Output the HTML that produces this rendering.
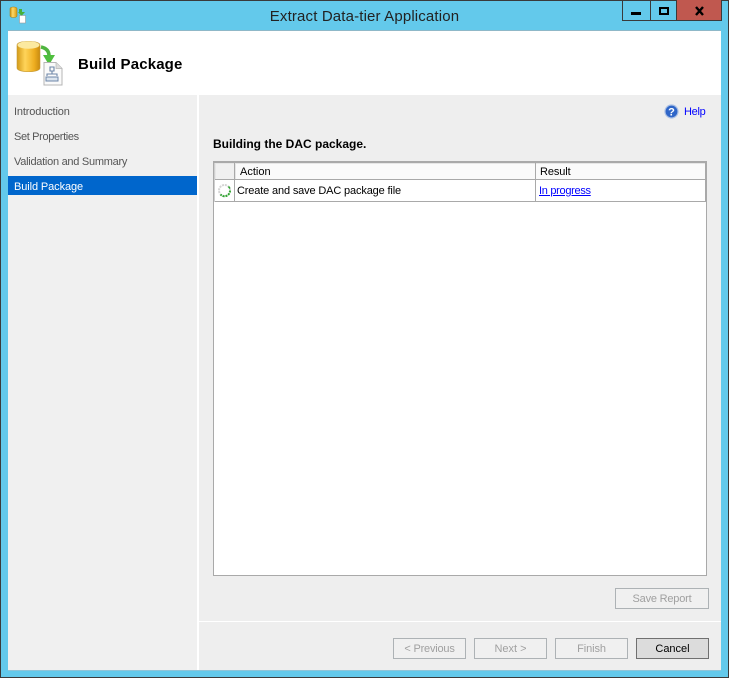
<!DOCTYPE html>
<html><head><meta charset="utf-8"><style>
html,body{margin:0;padding:0;width:729px;height:678px;overflow:hidden;background:#63c9eb}
body{position:relative;font-family:"Liberation Sans",sans-serif;font-size:11px;color:#000}
div,a,svg{position:absolute;white-space:nowrap}
.t{line-height:14px;height:14px}
.btn{box-sizing:border-box;width:73px;height:21px;border:1px solid #adb2b5;background:#f0f0f0;color:#a0a0a0;text-align:center;line-height:21px}
</style></head><body>
<div style="left:0;top:0;width:729px;height:1px;background:#3a3a3a"></div>
<div style="left:0;top:0;width:1px;height:678px;background:#3a3a3a"></div>
<div style="left:728px;top:0;width:1px;height:678px;background:#3a3a3a"></div>
<div style="left:0;top:677px;width:729px;height:1px;background:#3a3a3a"></div>
<svg style="left:9px;top:6px" width="18" height="18" viewBox="0 0 18 18">
<defs><linearGradient id="g0" x1="0" x2="1" y1="0" y2="0"><stop offset="0" stop-color="#c98f10"/><stop offset=".4" stop-color="#ffd866"/><stop offset="1" stop-color="#d79a12"/></linearGradient></defs>
<path d="M1 2.500C1 .500 8 .500 8 2.500V10C8 12 1 12 1 10Z" fill="url(#g0)" stroke="#a8780c" stroke-width=".5"/>
<path d="M10 3H13V6H16L12.500 10L9 6H10Z" fill="#45b03a"/>
<rect x="10.500" y="9.500" width="6" height="7.500" fill="#fff" stroke="#999" stroke-width=".6"/>
</svg>
<div class="t" style="left:0;top:8px;width:729px;height:18px;line-height:18px;font-size:15px;text-align:center;color:#222;letter-spacing:.15px">Extract Data-tier Application</div>
<div style="left:622px;top:0;width:100px;height:21px;box-sizing:border-box;border:1px solid #3a3a3a;border-top:0"></div>
<div style="left:676px;top:0;width:46px;height:21px;box-sizing:border-box;background:#c0584f;border:1px solid #3a3a3a;border-top:0"></div>
<div style="left:650px;top:0;width:1px;height:21px;background:#3a3a3a"></div>
<div style="left:631px;top:12px;width:10px;height:3px;background:#000"></div>
<div style="left:659px;top:7px;width:10px;height:8px;box-sizing:border-box;border:2px solid #000"></div>
<svg style="left:694px;top:6px" width="12" height="10" viewBox="0 0 12 10"><path d="M2 1l7 8M9 1l-7 8" stroke="#000" stroke-width="2.400" fill="none"/></svg>
<div style="left:8px;top:31px;width:713px;height:64px;background:#fff"></div>
<div style="left:8px;top:30px;width:713px;height:1px;background:#8fb8c8"></div>
<div style="left:8px;top:95px;width:189px;height:575px;background:#f0f0f0"></div>
<div style="left:197px;top:95px;width:2px;height:575px;background:#fff"></div>
<div style="left:199px;top:95px;width:522px;height:575px;background:#eee"></div>
<div style="left:8px;top:670px;width:713px;height:1px;background:#8fc4d8"></div>
<svg style="left:16px;top:40px" width="48" height="48" viewBox="0 0 48 48">
<defs><linearGradient id="g1" x1="0" x2="1" y1="0" y2="0"><stop offset="0" stop-color="#d39a18"/><stop offset=".35" stop-color="#ffd45a"/><stop offset=".75" stop-color="#eeae20"/><stop offset="1" stop-color="#c88a10"/></linearGradient></defs>
<path d="M1 5C1 0 24 0 24 5V28C24 33 1 33 1 28Z" fill="url(#g1)" stroke="#c49a3a" stroke-width=".6"/>
<ellipse cx="12.500" cy="5" rx="11" ry="3.800" fill="#fbe9a0"/>
<path d="M25 7C30 8 33 11 33 16" stroke="#4fb53f" stroke-width="3.500" fill="none"/>
<path d="M27 15H39L33 25Z" fill="#4fbf3f"/>
<path d="M28 22.500H40L46 28.500V45H28Z" fill="#fafafa" stroke="#b5b5b5"/>
<path d="M40 22.500V28.500H46" fill="#ddd" stroke="#b5b5b5" stroke-width=".7"/>
<path d="M34 27h4v4h-4zM36 31v3M31 36v-2h10v2" fill="none" stroke="#6d86a8" stroke-width="1.100"/>
<path d="M30 37h12v4H30z" fill="#dbe4ee" stroke="#6d86a8" stroke-width="1"/>
</svg>
<div class="t" style="left:78px;top:56px;height:18px;line-height:18px;font-size:15px;font-weight:bold;letter-spacing:.15px">Build Package</div>
<div class="t" style="left:14px;top:105px;color:#555;letter-spacing:-.15px">Introduction</div>
<div class="t" style="left:14px;top:130px;color:#555;letter-spacing:-.35px">Set Properties</div>
<div class="t" style="left:14px;top:155px;color:#555;letter-spacing:-.27px">Validation and Summary</div>
<div style="left:8px;top:176px;width:189px;height:19px;background:#0066cc"></div>
<div class="t" style="left:14px;top:180px;color:#fff;letter-spacing:-.1px">Build Package</div>
<svg style="left:664px;top:104px" width="15" height="15" viewBox="0 0 15 15">
<circle cx="7.500" cy="7.500" r="6.500" fill="#2f66c8" stroke="#a9bfe4" stroke-width="1.200"/>
<text x="7.500" y="11.500" font-family="Liberation Sans,sans-serif" font-size="11" font-weight="bold" fill="#fff" text-anchor="middle">?</text>
</svg>
<a class="t" style="left:684px;top:105px;color:#0000ff;text-decoration:none;letter-spacing:-.3px">Help</a>
<div class="t" style="left:213px;top:137px;font-size:12px;font-weight:bold">Building the DAC package.</div>
<div style="left:213px;top:161px;width:494px;height:415px;box-sizing:border-box;border:1px solid #a9a9a9;background:#fff"></div>
<div style="left:214px;top:162px;width:492px;height:18px;background:#e6e6e6"></div>
<div style="left:214px;top:162px;width:492px;height:1px;background:#a9a9a9"></div>
<div style="left:236px;top:164px;width:469px;height:15px;background:#fafafa"></div>
<div style="left:216px;top:164px;width:18px;height:15px;background:#f0f0f0"></div>
<div style="left:214px;top:179px;width:492px;height:1px;background:#a9a9a9"></div>
<div style="left:214px;top:201px;width:492px;height:1px;background:#a9a9a9"></div>
<div style="left:705px;top:162px;width:1px;height:40px;background:#a9a9a9"></div>
<div style="left:214px;top:163px;width:1px;height:39px;background:#cfcfcf"></div>
<div style="left:234px;top:163px;width:1px;height:39px;background:#a9a9a9"></div>
<div style="left:535px;top:163px;width:1px;height:39px;background:#a9a9a9"></div>
<div class="t" style="left:240px;top:165px">Action</div>
<div class="t" style="left:540px;top:165px;letter-spacing:-.1px">Result</div>
<svg style="left:217px;top:183px" width="15" height="15" viewBox="0 0 15 15">
<circle cx="7.500" cy="7.500" r="5.500" fill="none" stroke="#d4d4d4" stroke-width="2" stroke-dasharray="2 .9"/>
<path d="M13 7.500A5.500 5.500 0 0 1 3.500 11.500" fill="none" stroke="#2fa52f" stroke-width="2" stroke-dasharray="2 .9"/>
<path d="M11.500 3.500L13 5.500" stroke="#2fa52f" stroke-width="1.500"/>
</svg>
<div class="t" style="left:237px;top:184px;letter-spacing:-.15px">Create and save DAC package file</div>
<a class="t" style="left:539px;top:184px;color:#0000ff;text-decoration:underline;letter-spacing:-.3px">In progress</a>
<div class="btn" style="left:615px;top:588px;width:94px;letter-spacing:-.2px">Save Report</div>
<div style="left:199px;top:621px;width:522px;height:1px;background:#fff"></div>
<div class="btn" style="left:393px;top:638px;letter-spacing:-.2px">&lt; Previous</div>
<div class="btn" style="left:474px;top:638px">Next &gt;</div>
<div class="btn" style="left:555px;top:638px;letter-spacing:-.1px">Finish</div>
<div class="btn" style="left:636px;top:638px;background:#dcdcdc;border-color:#707070;color:#000">Cancel</div>
</body></html>
